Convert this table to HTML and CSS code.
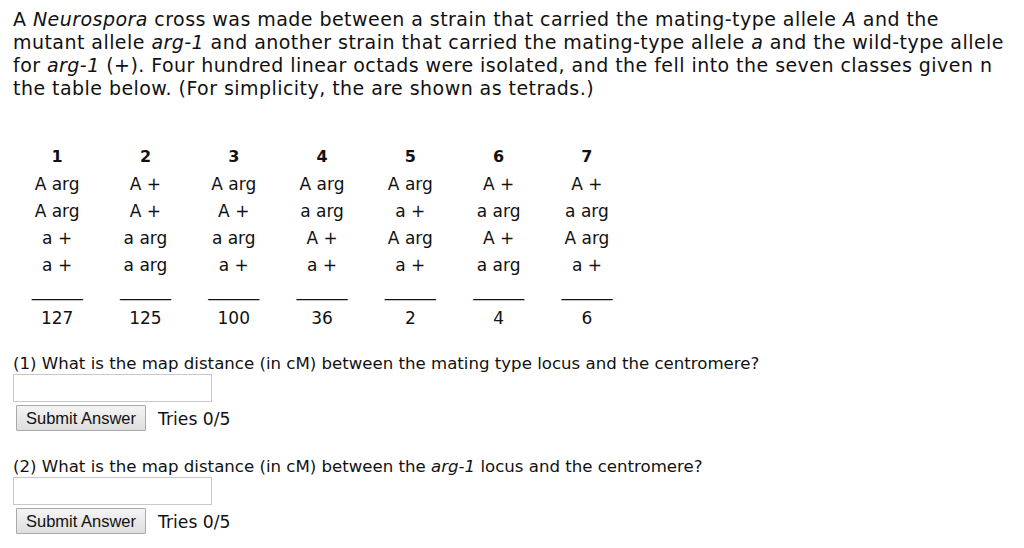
FILE: index.html
```html
<!DOCTYPE html>
<html>
<head>
<meta charset="utf-8">
<link rel="stylesheet" href="styles.css">
</head>
<body>
<div class="page">
  <p class="intro">A <i>Neurospora</i> cross was made between a strain that carried the mating-type allele <i>A</i> and the mutant allele <i>arg-1</i> and another strain that carried the mating-type allele <i>a</i> and the wild-type allele for <i>arg-1</i> (+). Four hundred linear octads were isolated, and the fell into the seven classes given n the table below. (For simplicity, the are shown as tetrads.)</p>

  <table class="octads">
    <tr class="head"><th>1</th><th>2</th><th>3</th><th>4</th><th>5</th><th>6</th><th>7</th></tr>
    <tr><td>A arg</td><td>A +</td><td>A arg</td><td>A arg</td><td>A arg</td><td>A +</td><td>A +</td></tr>
    <tr><td>A arg</td><td>A +</td><td>A +</td><td>a arg</td><td>a +</td><td>a arg</td><td>a arg</td></tr>
    <tr><td>a +</td><td>a arg</td><td>a arg</td><td>A +</td><td>A arg</td><td>A +</td><td>A arg</td></tr>
    <tr><td>a +</td><td>a arg</td><td>a +</td><td>a +</td><td>a +</td><td>a arg</td><td>a +</td></tr>
    <tr class="rule"><td>______</td><td>______</td><td>______</td><td>______</td><td>______</td><td>______</td><td>______</td></tr>
    <tr class="total"><td>127</td><td>125</td><td>100</td><td>36</td><td>2</td><td>4</td><td>6</td></tr>
  </table>

  <div class="question">
    <div class="qtext">(1) What is the map distance (in cM) between the mating type locus and the centromere?</div>
    <input class="answer" type="text">
    <div class="actions"><button class="submit">Submit Answer</button><span class="tries">Tries 0/5</span></div>
  </div>

  <div class="question q2">
    <div class="qtext">(2) What is the map distance (in cM) between the <i>arg-1</i> locus and the centromere?</div>
    <input class="answer" type="text">
    <div class="actions"><button class="submit">Submit Answer</button><span class="tries">Tries 0/5</span></div>
  </div>
</div>
</body>
</html>
```

FILE: styles.css
```css
html, body {
  margin: 0;
  padding: 0;
  background: #ffffff;
}
body {
  font-family: "DejaVu Sans", Verdana, sans-serif;
  color: #111111;
}
.page {
  padding: 8px 12px 0 13px;
}
.intro {
  margin: 0;
  font-size: 19px;
  letter-spacing: 0.45px;
  line-height: 23px;
}
.octads {
  margin-top: 43px;
  border-collapse: collapse;
  font-size: 17px;
}
.octads th, .octads td {
  width: 88.3px;
  padding: 0;
  text-align: center;
  height: 27px;
  line-height: 20px;
}
.octads th {
  font-weight: bold;
  font-size: 16px;
  height: 27px;
}
.octads .rule td {
  height: 26px;
  line-height: 24px;
  vertical-align: top;
}
.question {
  margin-top: 23px;
  font-size: 16.6px;
}
.q2 {
  margin-top: 26px;
}
.qtext {
  line-height: 20px;
}
.answer {
  display: block;
  width: 197px;
  height: 26px;
  box-sizing: content-box;
  padding: 0;
  margin: 0;
  border: 1px solid #c8c8c8;
  background: #fff;
}
.actions {
  display: flex;
  align-items: center;
  gap: 12px;
  margin-top: 3px;
  padding-left: 3px;
}
.submit {
  font-family: "Liberation Sans", Arial, sans-serif;
  font-size: 16.5px;
  color: #111;
  height: 26px;
  width: 130px;
  padding: 0;
  border: 1px solid #a9a9a9;
  border-radius: 1px;
  background: linear-gradient(#f4f4f4, #dedede);
}
.tries {
  font-size: 17.2px;
  padding-top: 2px;
}
```
